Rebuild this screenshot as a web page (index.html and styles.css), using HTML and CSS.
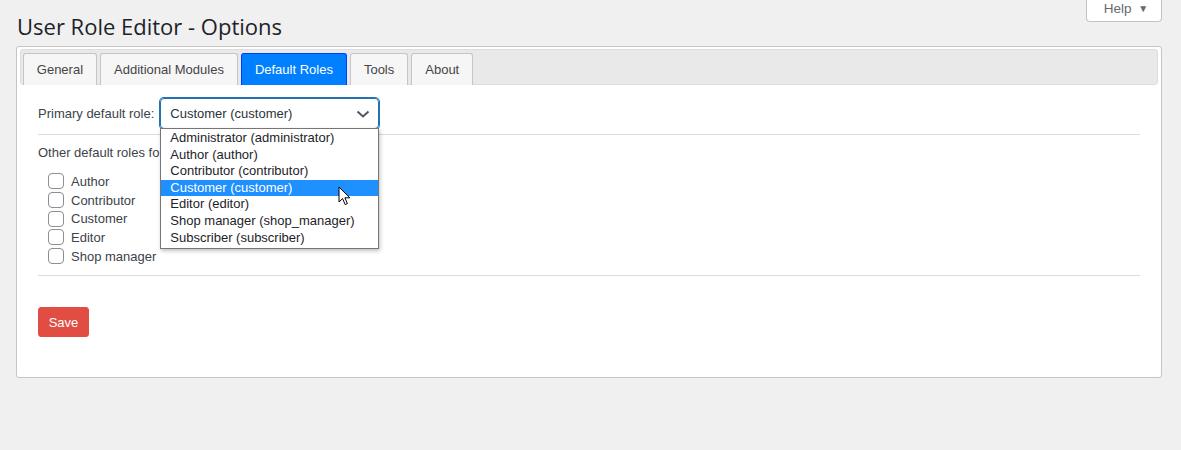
FILE: index.html
```html
<!DOCTYPE html>
<html lang="en">
<head>
    <meta charset="UTF-8">
    <title>User Role Editor - Options</title>
    <link rel="stylesheet" href="styles.css">
</head>
<body>
    <div class="wrap">
        <div class="page-head">
            <h1>User Role Editor - Options</h1>
            <button class="help-link">Help <span class="help-arrow">&#9660;</span></button>
        </div>

        <div class="tabs">
            <ul class="tabs-nav">
                <li><a href="#">General</a></li>
                <li><a href="#">Additional Modules</a></li>
                <li class="active"><a href="#">Default Roles</a></li>
                <li><a href="#">Tools</a></li>
                <li><a href="#">About</a></li>
            </ul>

            <div class="panel">
                <div class="primary-row">
                    <label>Primary default role:</label>
                    <div class="select-wrap">
                        <div class="select-box">
                            <span>Customer (customer)</span>
                            <svg class="chevron" width="14" height="8" viewBox="0 0 14 8">
                                <path d="M1.5 1.5l5.5 5 5.5-5" fill="none" stroke="#50575e" stroke-width="2"/>
                            </svg>
                        </div>
                        <ul class="select-list">
                            <li>Administrator (administrator)</li>
                            <li>Author (author)</li>
                            <li>Contributor (contributor)</li>
                            <li class="selected">Customer (customer)</li>
                            <li>Editor (editor)</li>
                            <li>Shop manager (shop_manager)</li>
                            <li>Subscriber (subscriber)</li>
                        </ul>
                        <svg class="cursor" width="13" height="20" viewBox="0 0 13 20">
                            <path d="M1 1v15l3.6-3.4 2.6 6 2.2-1-2.5-5.8h5z" fill="#fff" stroke="#000" stroke-width="1" stroke-linejoin="round"/>
                        </svg>
                    </div>
                </div>
                <hr>
                <p class="other-title">Other default roles for new user:</p>
                <div class="role-list">
                    <label class="check"><span class="box"></span>Author</label>
                    <label class="check"><span class="box"></span>Contributor</label>
                    <label class="check"><span class="box"></span>Customer</label>
                    <label class="check"><span class="box"></span>Editor</label>
                    <label class="check"><span class="box"></span>Shop manager</label>
                </div>
                <hr>
                <button class="save-btn">Save</button>
            </div>
        </div>
    </div>
</body>
</html>
```

FILE: styles.css
```css
body {
    margin: 0;
    background-color: #f0f0f1;
    font-family: "Liberation Sans", Arial, sans-serif;
    font-size: 13px;
    color: #3c434a;
}

.wrap {
    padding: 0 19px 0 16px;
}

.page-head {
    display: flex;
    justify-content: space-between;
    align-items: flex-start;
}

h1 {
    margin: 12px 0 0 1px;
    font-family: "Open Sans", "Noto Sans", sans-serif;
    font-size: 22px;
    font-weight: 400;
    line-height: 29px;
    color: #1d2327;
}

.help-link {
    width: 76px;
    height: 22px;
    padding: 0 0 4px 4px;
    background-color: #fff;
    border: 1px solid #c3c4c7;
    border-top: none;
    border-radius: 0 0 4px 4px;
    font-family: "Liberation Sans", Arial, sans-serif;
    font-size: 13.5px;
    color: #646970;
}

.help-arrow {
    font-size: 10px;
    margin-left: 3px;
    position: relative;
    top: -1px;
}

.tabs {
    margin-top: 5px;
    padding: 2px 3px 0;
    background-color: #fff;
    border: 1px solid #c5c5c5;
    border-radius: 3px;
}

.tabs-nav {
    display: flex;
    margin: 0;
    padding: 3px 2px 0;
    list-style: none;
    background-color: #e9e9e9;
    border: 1px solid #dddddd;
    border-radius: 3px;
}

.tabs-nav li {
    margin: 0 3.4px -1px 0;
    background-color: #f6f6f6;
    border: 1px solid #c5c5c5;
    border-bottom: none;
    border-radius: 3px 3px 0 0;
}

.tabs-nav li a {
    display: block;
    padding: 8px 12.8px 8px;
    line-height: 15px;
    color: #454545;
    text-decoration: none;
}

.tabs-nav li.active {
    background-color: #007fff;
    border-color: #003eff;
}

.tabs-nav li.active a {
    color: #fff;
}

.panel {
    padding: 13px 18px 40px;
}

.primary-row {
    display: flex;
    align-items: center;
}

.primary-row label {
    color: #3c434a;
    margin-right: 6px;
}

.select-wrap {
    position: relative;
}

.select-box {
    display: flex;
    align-items: center;
    justify-content: space-between;
    box-sizing: border-box;
    width: 219px;
    height: 31px;
    padding: 0 8px 0 9px;
    border: 1px solid #2271b1;
    border-radius: 4px;
    box-shadow: 0 0 0 1px #2271b1;
    color: #2c3338;
}

.select-box .chevron {
    margin-top: 1px;
}

.select-list {
    position: absolute;
    left: 0;
    top: 30px;
    width: 219px;
    box-sizing: border-box;
    margin: 0;
    padding: 1px 0 2px;
    list-style: none;
    background-color: #fff;
    border: 1px solid #767676;
    box-shadow: 1px 2px 4px rgba(0, 0, 0, 0.25);
    font-size: 13px;
    color: #1d2327;
    z-index: 2;
}

.select-list li {
    height: 16.6px;
    line-height: 16px;
    padding-left: 9px;
}

.select-list li.selected {
    background-color: #1e90ff;
    color: #fff;
}

.cursor {
    position: absolute;
    left: 178px;
    top: 88px;
    z-index: 3;
}

hr {
    margin: 5px 0 0;
    border: none;
    border-top: 1px solid #dcdcde;
}

.other-title {
    margin: 10px 0 11px;
    line-height: 16px;
    color: #3c434a;
}

.role-list {
    display: flex;
    flex-direction: column;
    padding-left: 10px;
}

.check {
    display: flex;
    align-items: center;
    height: 18.7px;
}

.box {
    display: inline-block;
    box-sizing: border-box;
    width: 16px;
    height: 16px;
    margin-right: 7px;
    background-color: #fff;
    border: 1px solid #8c8f94;
    border-radius: 4px;
}

.role-list + hr {
    margin-top: 10px;
}

.save-btn {
    margin-top: 31px;
    width: 51px;
    height: 30px;
    padding: 0;
    background-color: #e14d43;
    border: 1px solid #e14d43;
    border-radius: 3px;
    color: #fff;
    font-family: "Liberation Sans", Arial, sans-serif;
    font-size: 13px;
}
```
